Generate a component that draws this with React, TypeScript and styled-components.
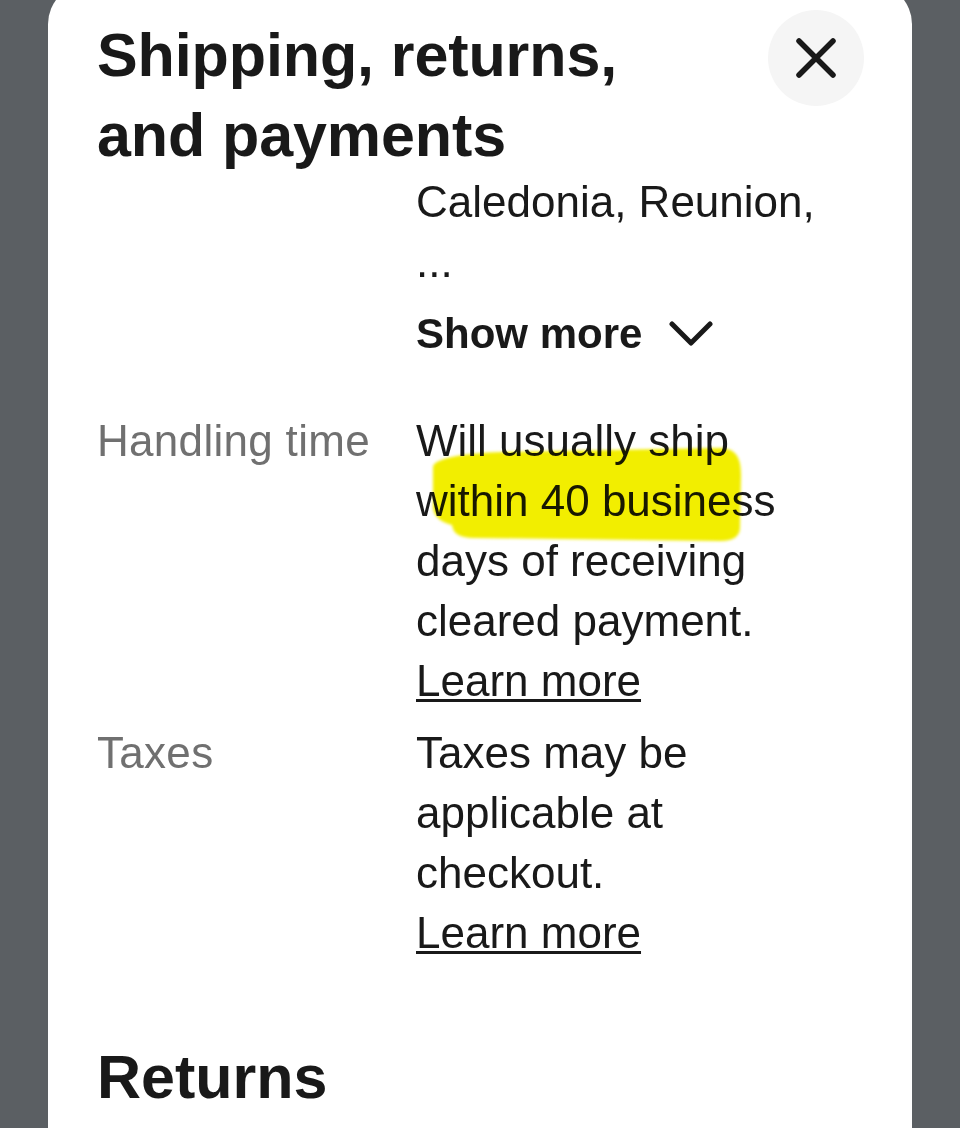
import React from "react";
import styled, { createGlobalStyle } from "styled-components";

const GlobalStyle = createGlobalStyle`
  html, body {
    margin: 0;
    padding: 0;
    background: #5b5f63;
    overflow: hidden;
  }
  * { box-sizing: border-box; }
`;

const Page = styled.div`
  padding: 0 48px;
  height: 1128px;
  overflow: hidden;
  font-family: "Liberation Sans", Arial, sans-serif;
  color: #191919;
`;

const Sheet = styled.div`
  background: #ffffff;
  border-radius: 40px 40px 0 0;
  margin-top: -16px;
  padding: 31px 48px 0 49px;
  min-height: 1300px;
`;

const Header = styled.div`
  display: flex;
  justify-content: space-between;
  align-items: flex-start;
`;

const Title = styled.h2`
  margin: 0;
  font-size: 61px;
  line-height: 80px;
  font-weight: 700;
  letter-spacing: -0.1px;
`;

const CloseButton = styled.button`
  width: 96px;
  height: 96px;
  margin-top: -5px;
  border: none;
  border-radius: 50%;
  background: #f5f5f5;
  display: flex;
  align-items: center;
  justify-content: center;
  padding: 0;
  flex-shrink: 0;
`;

const Content = styled.div`
  margin-top: -3px;
`;

const Row = styled.div`
  display: grid;
  grid-template-columns: 319px 1fr;
  font-size: 44px;
  line-height: 60px;
`;

const Label = styled.div`
  color: #707070;
  letter-spacing: 0.3px;
`;

const Value = styled.div`
  position: relative;
  color: #191919;
`;

const ShowMore = styled.button`
  display: flex;
  align-items: center;
  gap: 27px;
  margin-top: 12px;
  padding: 0;
  border: none;
  background: none;
  font-family: "Liberation Sans", Arial, sans-serif;
  font-size: 42px;
  line-height: 60px;
  font-weight: 700;
  color: #191919;
`;

const DetailList = styled.div`
  display: flex;
  flex-direction: column;
  gap: 12px;
  margin-top: 47px;
`;

const TextLine = styled.span`
  position: relative;
  z-index: 1;
`;

const LearnMore = styled.a`
  color: #191919;
  text-decoration: underline;
  text-decoration-thickness: 3px;
  text-underline-offset: 3px;
`;

const Highlight = styled.svg`
  position: absolute;
  left: 0;
  top: 0;
  pointer-events: none;
  mix-blend-mode: multiply;
  z-index: 2;
`;

const SectionHeading = styled.h2`
  margin: 73px 0 0;
  font-size: 61px;
  line-height: 82px;
  font-weight: 700;
`;

const CloseIcon = () => (
  <svg width="40" height="40" viewBox="0 0 40 40">
    <path
      d="M3 3 L37 37 M37 3 L3 37"
      stroke="#191919"
      strokeWidth="5.5"
      strokeLinecap="round"
      fill="none"
    />
  </svg>
);

const Chevron = () => (
  <svg width="44" height="26" viewBox="0 0 44 26">
    <path
      d="M3 3 L22 22 L41 3"
      stroke="#191919"
      strokeWidth="5"
      strokeLinecap="round"
      strokeLinejoin="round"
      fill="none"
    />
  </svg>
);

const Marker = () => (
  <Highlight width="340" height="140" viewBox="0 0 340 140">
    <defs>
      <filter id="soft" x="-5%" y="-5%" width="110%" height="110%">
        <feGaussianBlur stdDeviation="1.4" />
      </filter>
    </defs>
    <path
      d="M17 56 C 18 47, 50 42, 86 41 L 300 37 C 320 36, 325 46, 325 64 L 324 116 C 324 127, 315 130, 304 130 L 58 127 C 43 127, 37 122, 36 114 C 24 111, 16 104, 17 94 Z"
      fill="#f2ee00"
      filter="url(#soft)"
    />
  </Highlight>
);

export default function App() {
  return (
    <>
      <GlobalStyle />
      <Page>
        <Sheet>
          <Header>
            <Title>
              Shipping, returns,
              <br />
              and payments
            </Title>
            <CloseButton aria-label="Close">
              <CloseIcon />
            </CloseButton>
          </Header>
          <Content>
            <Row>
              <Label />
              <Value>
                Caledonia, Reunion,
                <br />
                ...
                <ShowMore>
                  Show more
                  <Chevron />
                </ShowMore>
              </Value>
            </Row>
            <DetailList>
              <Row>
                <Label>Handling time</Label>
                <Value>
                  <TextLine>
                    Will usually ship
                    <br />
                    within 40 business
                    <br />
                    days of receiving
                    <br />
                    cleared payment.
                  </TextLine>
                  <br />
                  <LearnMore href="#">Learn more</LearnMore>
                  <Marker />
                </Value>
              </Row>
              <Row>
                <Label>Taxes</Label>
                <Value>
                  Taxes may be
                  <br />
                  applicable at
                  <br />
                  checkout.
                  <br />
                  <LearnMore href="#">Learn more</LearnMore>
                </Value>
              </Row>
            </DetailList>
            <SectionHeading>Returns</SectionHeading>
          </Content>
        </Sheet>
      </Page>
    </>
  );
}
